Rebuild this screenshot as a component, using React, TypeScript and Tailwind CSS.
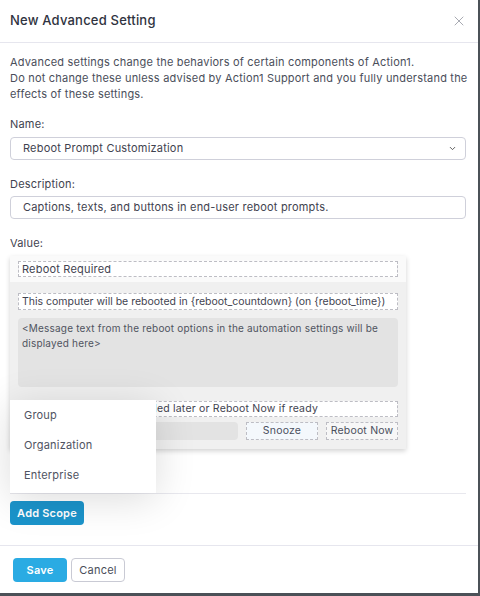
import { ChevronDown, X } from 'lucide-react'

const dashed = 'border border-dashed border-[#bdbdc4] bg-white text-[#3f4350]'

function PromptPreview() {
  return (
    <div className="w-[396px] bg-[#f0f0f0] shadow-[0_2px_5px_rgba(0,0,0,0.18)]">
      <div className="bg-[#fafafa] px-2 pt-[5px] pb-[5px]">
        <div className={`${dashed} h-[16px] px-[3px] text-[11px] leading-[14px]`}>Reboot Required</div>
      </div>
      <div className="px-2 pt-[11px] pb-[9px]">
        <div className={`${dashed} h-[17px] px-[3px] text-[10.5px] leading-[15px] tracking-normal whitespace-nowrap overflow-hidden`}>
          This computer will be rebooted in {'{reboot_countdown}'} (on {'{reboot_time}'})
        </div>
        <div className="mt-2 h-[69px] rounded-sm bg-[#e3e3e3] px-[4px] pt-[3px] text-[10px] leading-[15px] text-[#50545f]">
          &lt;Message text from the reboot options in the automation settings will be displayed here&gt;
        </div>
        <div className={`${dashed} mt-[14px] h-[16px] px-[3px] text-[10.5px] leading-[14px] whitespace-nowrap overflow-hidden`}>
          Click Snooze to be reminded later or Reboot Now if ready
        </div>
        <div className="mt-[5px] flex h-[18px] gap-2">
          <div className="flex-1 rounded-sm bg-[#e3e3e3]" />
          <div className="flex w-[72px] items-center justify-center border border-dashed border-[#bdbdc4] bg-[#f4f8fc] text-[10.5px] text-[#4a4f5c]">
            Snooze
          </div>
          <div className="flex w-[72px] items-center justify-center border border-dashed border-[#bdbdc4] bg-[#f7f7f7] text-[10.5px] text-[#4a4f5c]">
            Reboot Now
          </div>
        </div>
      </div>
    </div>
  )
}

export default function App() {
  return (
    <div
      className="h-[596px] w-[480px] overflow-hidden bg-[#4b5157] tracking-[0.2px]"
      style={{ fontFamily: 'Inter, "Noto Sans", sans-serif' }}
    >
      <div className="flex h-[593px] w-[478px] flex-col bg-white">
        <div className="flex h-[43px] items-center justify-between border-b border-[#e6e6ee] pl-[10px] pr-[11px]">
          <h3 className="text-[13px] font-medium text-[#2f3340]">New Advanced Setting</h3>
          <X size={16} strokeWidth={1.3} className="text-[#9a9ca6]" />
        </div>

        <div className="flex-1 px-[10px] pt-[11px] text-[#4a4e5a]">
          <p className="text-[11px] leading-[16px]">
            Advanced settings change the behaviors of certain components of Action1.
            <br />
            Do not change these unless advised by Action1 Support and you fully understand the effects of these settings.
          </p>

          <div className="mt-[14px] text-[11px] leading-[16px] text-[#3f4350]">Name:</div>
          <div className="mt-[5px] flex h-[23px] w-[456px] items-center justify-between rounded-sm border border-[#cfd0da] pl-[12px] pr-[8px] text-[11px] text-[#3f4350]">
            <span>Reboot Prompt Customization</span>
            <ChevronDown size={9} strokeWidth={2.5} className="text-[#555]" />
          </div>

          <div className="mt-[16px] text-[11px] leading-[16px] text-[#3f4350]">Description:</div>
          <div className="mt-[4px] flex h-[23px] w-[456px] items-center rounded-sm border border-[#cfd0da] pl-[12px] text-[11px] text-[#3f4350]">
            Captions, texts, and buttons in end-user reboot prompts.
          </div>

          <div className="mt-[16px] text-[11px] leading-[16px] text-[#3f4350]">Value:</div>
          <div className="mt-[5px]">
            <PromptPreview />
          </div>

          <div className="relative mt-[44px] w-[456px] border-t border-[#e8e8ee] pt-[5px]">
            <div className="absolute bottom-full left-0 z-10 mb-[1px] flex h-[93px] w-[146px] flex-col bg-white shadow-[0_6px_40px_rgba(0,0,0,0.14)]">
              {['Group', 'Organization', 'Enterprise'].map(s => (
                <div key={s} className="flex h-[30px] items-center pl-[14px] text-[11px] text-[#4f5362]">
                  {s}
                </div>
              ))}
            </div>
            <button className="h-[24px] w-[74px] rounded-sm bg-[#1b94cb] text-[11px] font-semibold text-white">
              Add Scope
            </button>
          </div>
        </div>

        <div className="flex h-[48px] items-start gap-[4px] border-t border-[#e6e6ee] pl-[13px] pt-[12px]">
          <button className="h-[24px] w-[54px] rounded-sm bg-[#2aabe3] text-[11px] font-semibold text-white">Save</button>
          <button className="h-[24px] w-[54px] rounded-sm border border-[#c9cad4] bg-white text-[11px] text-[#4a4e5a]">
            Cancel
          </button>
        </div>
      </div>
    </div>
  )
}
